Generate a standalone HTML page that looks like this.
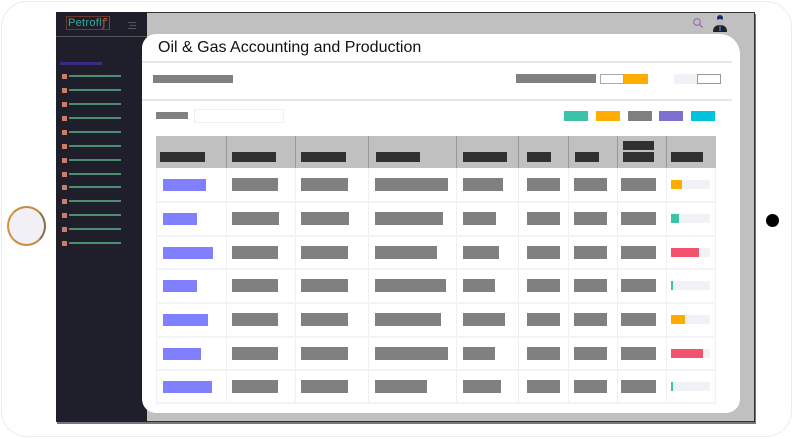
<!DOCTYPE html>
<html><head><meta charset="utf-8"><style>
*{margin:0;padding:0;box-sizing:border-box}
body{width:794px;height:439px;background:#fff;position:relative;overflow:hidden;font-family:"Liberation Sans",sans-serif}
.a{position:absolute}
.frame{left:1px;top:1px;width:791px;height:436px;border:1.5px solid #ececf0;border-radius:26px}
.screen{left:56px;top:12px;width:699px;height:410px;background:#c0c0c0;border:1px solid #333;box-shadow:1px 2px 0 #777}
.side{left:56px;top:12px;width:91px;height:410px;background:#1e1f2b}
.card{left:142px;top:34px;width:598px;height:379px;background:#fff;border-radius:14px 20px 14px 14px}
.g{background:#808080}
.d{background:#303030}
.l{background:#8080ff}
.pb{background:#f1f2f7}
</style></head><body>
<div class="a frame"></div>
<div class="a" style="left:7px;top:206px;width:39px;height:40px;border-radius:50%;background:#f0f0f6;border:2px solid #c88a3c;border-left-color:#d4913a;border-right-color:#8a6a48"></div>
<div class="a" style="left:766px;top:214px;width:13px;height:13px;border-radius:50%;background:#000"></div>
<div class="a screen"></div>
<div class="a side"></div>
<div class="a" style="left:66px;top:16px;width:44px;height:14px;border:1px solid #6b3a2a;border-right-color:#2a6a6a;font-size:11px;color:#3aa89a;line-height:12px;padding-left:1px;letter-spacing:0.3px">Petrofl<span style="color:#c05a3a">ꝭ</span></div>
<div class="a" style="left:128px;top:22px;width:8px;height:1px;background:#555"></div>
<div class="a" style="left:130px;top:25px;width:6px;height:1px;background:#555"></div>
<div class="a" style="left:128px;top:28px;width:8px;height:1px;background:#555"></div>
<div class="a" style="left:56px;top:36px;width:91px;height:1px;background:#555"></div>
<div class="a" style="left:60px;top:62px;width:42px;height:3px;background:#3c2a86"></div>
<div id="si"></div>
<svg class="a" style="left:692px;top:17px" width="12" height="12"><circle cx="5" cy="5" r="3.3" fill="none" stroke="#9b6bb5" stroke-width="1.2"/><line x1="7.5" y1="7.5" x2="10.5" y2="10.5" stroke="#9b6bb5" stroke-width="1.3"/></svg>
<svg class="a" style="left:712px;top:13px" width="16" height="20"><circle cx="8" cy="5" r="3" fill="#1a2a6a"/><circle cx="8" cy="9" r="3" fill="#bbb"/><path d="M1 19 Q1 12 8 12 Q15 12 15 19Z" fill="#222"/><rect x="7" y="12" width="2" height="6" fill="#3a5ab0"/></svg>
<div class="a card"></div>
<div class="a" style="left:158px;top:39px;font-size:16px;color:#111">Oil &amp; Gas Accounting and Production</div>
<div class="a" style="left:142px;top:61px;width:590px;height:2px;background:#e6e6e6"></div>
<div class="a g" style="left:153px;top:75px;width:80px;height:8px"></div>
<div class="a g" style="left:516px;top:74px;width:80px;height:9px"></div>
<div class="a" style="left:600px;top:74px;width:24px;height:10px;border:1px solid #aaa;background:#fff"></div>
<div class="a" style="left:624px;top:74px;width:24px;height:10px;background:#ffab00"></div>
<div class="a" style="left:674px;top:74px;width:23px;height:10px;background:#f1f2f7"></div>
<div class="a" style="left:697px;top:74px;width:24px;height:10px;border:1px solid #999;background:#fff"></div>
<div class="a" style="left:142px;top:99px;width:590px;height:2px;background:#e6e6e6"></div>
<div class="a g" style="left:156px;top:112px;width:32px;height:7px"></div>
<div class="a" style="left:194px;top:109px;width:90px;height:14px;border:1px solid #f0f0f0"></div>
<div class="a" style="left:564px;top:111px;width:24px;height:10px;background:#3cc2a4"></div>
<div class="a" style="left:596px;top:111px;width:24px;height:10px;background:#ffab00"></div>
<div class="a" style="left:628px;top:111px;width:24px;height:10px;background:#808080"></div>
<div class="a" style="left:659px;top:111px;width:24px;height:10px;background:#7b6fd0"></div>
<div class="a" style="left:691px;top:111px;width:24px;height:10px;background:#00c4dc"></div>
<div class="a" style="left:156px;top:136px;width:560px;height:32px;background:#c0c0c0"></div>
<div id="tb"></div>
<script>
var s='';
[76,90,104,118,132,146,160,174,187,201,215,229,243].forEach(function(y){
s+='<div class="a" style="left:62px;top:'+(y-2)+'px;width:5px;height:5px;background:#c87e6a"></div><div class="a" style="left:69px;top:'+(y-1)+'px;width:52px;height:2px;background:#4e8c73"></div>';});
document.getElementById('si').outerHTML=s;
var t='';
var cols=[156,227,296,369,457,519,569,618,667,716];
for(var i=1;i<9;i++)t+='<div class="a" style="left:'+(cols[i]-1)+'px;top:136px;width:1px;height:32px;background:#999"></div>';
[[160,205],[232,276],[301,346],[376,420],[463,507],[527,551],[575,599],[623,654],[671,703]].forEach(function(b){t+='<div class="a d" style="left:'+b[0]+'px;top:152px;width:'+(b[1]-b[0])+'px;height:10px"></div>';});
t+='<div class="a d" style="left:623px;top:141px;width:31px;height:9px"></div>';
var rb=[168,202,236,269,303,337,370,403];
for(var i=1;i<9;i++)t+='<div class="a" style="left:'+(cols[i]-1)+'px;top:168px;width:1px;height:235px;background:#f0f0f3"></div>';
t+='<div class="a" style="left:156px;top:168px;width:1px;height:235px;background:#f0f0f3"></div><div class="a" style="left:715px;top:168px;width:1px;height:235px;background:#f0f0f3"></div>';
for(var r=1;r<8;r++)t+='<div class="a" style="left:156px;top:'+(rb[r]-1)+'px;width:560px;height:2px;background:#f3f3f7"></div>';
var rows=[
[206,278,348,448,503,'#ffab00',682],
[197,279,349,443,496,'#3cc2a4',679],
[213,278,348,437,499,'#f3526e',699],
[197,278,348,446,495,'#3cc2a4',673],
[208,278,348,441,505,'#ffab00',685],
[201,278,348,448,495,'#f3526e',703],
[212,278,348,427,501,'#3cc2a4',673]];
rows.forEach(function(w,r){var y=rb[r]+10;
t+='<div class="a l" style="left:163px;top:'+(y+1)+'px;width:'+(w[0]-163)+'px;height:12px"></div>';
t+='<div class="a g" style="left:232px;top:'+y+'px;width:'+(w[1]-232)+'px;height:13px"></div>';
t+='<div class="a g" style="left:301px;top:'+y+'px;width:'+(w[2]-301)+'px;height:13px"></div>';
t+='<div class="a g" style="left:375px;top:'+y+'px;width:'+(w[3]-375)+'px;height:13px"></div>';
t+='<div class="a g" style="left:463px;top:'+y+'px;width:'+(w[4]-463)+'px;height:13px"></div>';
t+='<div class="a g" style="left:527px;top:'+y+'px;width:33px;height:13px"></div>';
t+='<div class="a g" style="left:574px;top:'+y+'px;width:33px;height:13px"></div>';
t+='<div class="a g" style="left:621px;top:'+y+'px;width:35px;height:13px"></div>';
t+='<div class="a pb" style="left:671px;top:'+(y+2)+'px;width:39px;height:9px"></div>';
t+='<div class="a" style="left:671px;top:'+(y+2)+'px;width:'+(w[6]-671)+'px;height:9px;background:'+w[5]+'"></div>';});
document.getElementById('tb').outerHTML=t;
</script>
</body></html>
